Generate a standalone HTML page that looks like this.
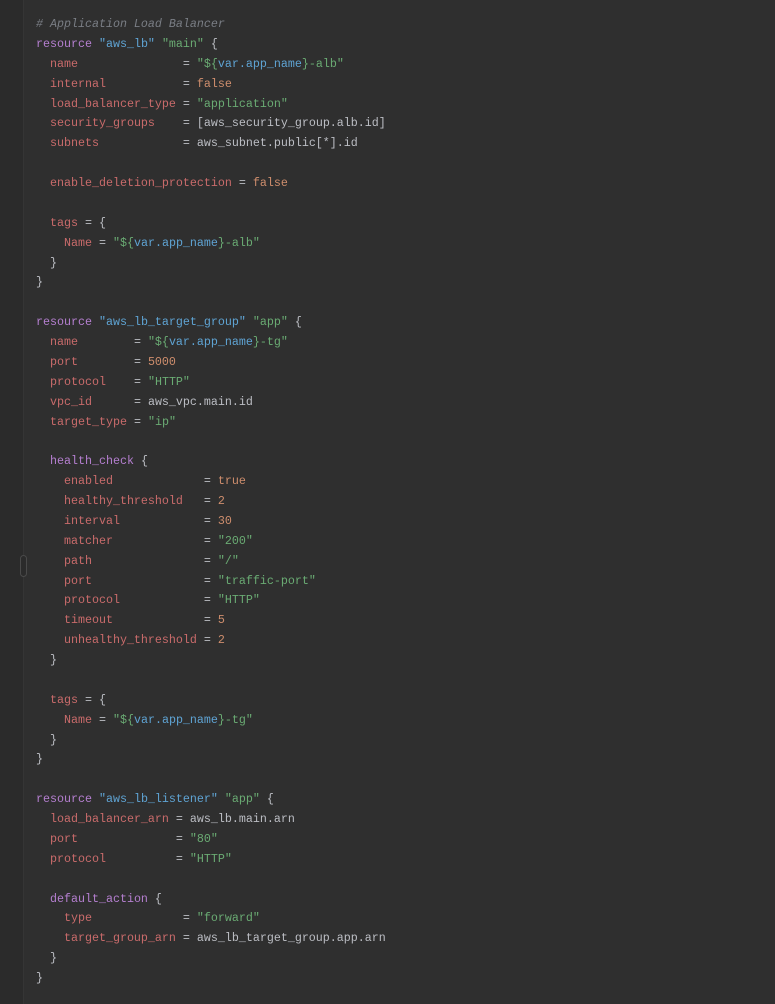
<!DOCTYPE html>
<html><head><meta charset="utf-8"><style>
html,body{margin:0;padding:0;width:775px;height:1004px;overflow:hidden;background:#2f2f2f}
.g{position:absolute;left:0;top:0;width:23px;height:1004px;background:#2b2b2b;border-right:1px solid #353535}
.fold{position:absolute;left:20px;top:555px;width:5px;height:20px;border:1px solid #4a4a4a;border-radius:4px;background:#2b2b2b}
pre{position:absolute;left:36px;top:15px;margin:0;font-family:"Liberation Mono",monospace;font-size:11.67px;line-height:19.875px;color:#bcbec4}
.c{color:#7a7e85;font-style:italic}.k{color:#b57fd0}.t{color:#5fa4d4}.s{color:#6aab73}.p{color:#c96b6b}.o{color:#cf8e6d}.v{color:#5fa4d4}
</style></head><body><div class="g"></div><div class="fold"></div><pre><span class="c"># Application Load Balancer</span>
<span class="k">resource</span> <span class="t">"aws_lb"</span> <span class="s">"main"</span> {
  <span class="p">name</span>               = <span class="s">"${</span><span class="v">var.app_name</span><span class="s">}-alb"</span>
  <span class="p">internal</span>           = <span class="o">false</span>
  <span class="p">load_balancer_type</span> = <span class="s">"application"</span>
  <span class="p">security_groups</span>    = [aws_security_group.alb.id]
  <span class="p">subnets</span>            = aws_subnet.public[*].id

  <span class="p">enable_deletion_protection</span> = <span class="o">false</span>

  <span class="p">tags</span> = {
    <span class="p">Name</span> = <span class="s">"${</span><span class="v">var.app_name</span><span class="s">}-alb"</span>
  }
}

<span class="k">resource</span> <span class="t">"aws_lb_target_group"</span> <span class="s">"app"</span> {
  <span class="p">name</span>        = <span class="s">"${</span><span class="v">var.app_name</span><span class="s">}-tg"</span>
  <span class="p">port</span>        = <span class="o">5000</span>
  <span class="p">protocol</span>    = <span class="s">"HTTP"</span>
  <span class="p">vpc_id</span>      = aws_vpc.main.id
  <span class="p">target_type</span> = <span class="s">"ip"</span>

  <span class="k">health_check</span> {
    <span class="p">enabled</span>             = <span class="o">true</span>
    <span class="p">healthy_threshold</span>   = <span class="o">2</span>
    <span class="p">interval</span>            = <span class="o">30</span>
    <span class="p">matcher</span>             = <span class="s">"200"</span>
    <span class="p">path</span>                = <span class="s">"/"</span>
    <span class="p">port</span>                = <span class="s">"traffic-port"</span>
    <span class="p">protocol</span>            = <span class="s">"HTTP"</span>
    <span class="p">timeout</span>             = <span class="o">5</span>
    <span class="p">unhealthy_threshold</span> = <span class="o">2</span>
  }

  <span class="p">tags</span> = {
    <span class="p">Name</span> = <span class="s">"${</span><span class="v">var.app_name</span><span class="s">}-tg"</span>
  }
}

<span class="k">resource</span> <span class="t">"aws_lb_listener"</span> <span class="s">"app"</span> {
  <span class="p">load_balancer_arn</span> = aws_lb.main.arn
  <span class="p">port</span>              = <span class="s">"80"</span>
  <span class="p">protocol</span>          = <span class="s">"HTTP"</span>

  <span class="k">default_action</span> {
    <span class="p">type</span>             = <span class="s">"forward"</span>
    <span class="p">target_group_arn</span> = aws_lb_target_group.app.arn
  }
}</pre></body></html>
